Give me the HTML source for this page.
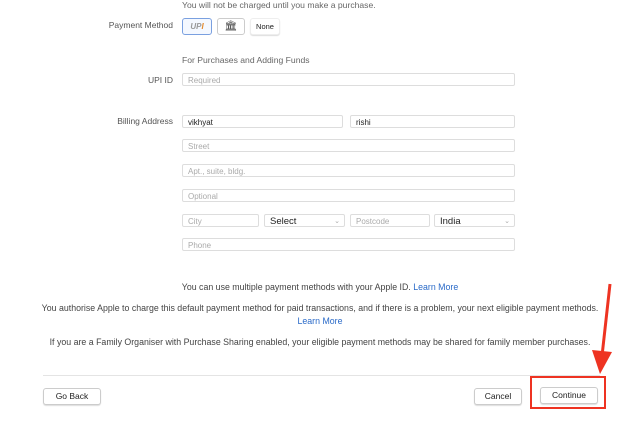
<html><head><style>
body{margin:0;width:640px;height:428px;background:#fff;font-family:"Liberation Sans",sans-serif;position:relative;overflow:hidden;color:#333}
.a{position:absolute}
.l{position:absolute;font-size:8.5px;color:#555;text-align:right;width:100px}
.i{position:absolute;height:13px;border:1px solid #ddd;border-radius:2px;font-size:8px;color:#aaa;line-height:13px;padding-left:5px;box-sizing:border-box}
.v{color:#222}
.t{position:absolute;font-size:8.8px;color:#444;width:640px;text-align:center;white-space:nowrap}
.b{position:absolute;border:1px solid #ccc;border-radius:3px;font-size:8.5px;text-align:center;line-height:15px;height:17px;box-sizing:border-box;background:#fff;color:#222;box-shadow:0 1px 1px #ddd}
a{color:#2a6ac8;text-decoration:none}
</style></head><body>
<div class="a" style="left:182px;top:0;font-size:8.6px;color:#666">You will not be charged until you make a purchase.</div>
<div class="l" style="left:73px;top:20px">Payment Method</div>
<div class="a" style="left:182px;top:18px;width:30px;height:17px;border:1px solid #7aa0e0;border-radius:3px;background:#f4f8ff;box-sizing:border-box;font-size:8px;font-style:italic;font-weight:bold;color:#999;text-align:center;line-height:15px">UP<span style="color:#e58a2a">I</span></div>
<div class="a" style="left:217px;top:18px;width:28px;height:17px;border:1px solid #ccc;border-radius:3px;box-sizing:border-box;text-align:center;font-size:10px;line-height:15px">🏛</div>
<div class="b" style="left:250px;top:18px;width:30px;font-size:7.5px;border-color:#eee">None</div>
<div class="a" style="left:182px;top:55px;font-size:8.6px;color:#666">For Purchases and Adding Funds</div>
<div class="l" style="left:73px;top:75px">UPI ID</div>
<div class="i" style="left:182px;top:73px;width:333px">Required</div>
<div class="l" style="left:73px;top:116px">Billing Address</div>
<div class="i v" style="left:182px;top:115px;width:161px">vikhyat</div>
<div class="i v" style="left:350px;top:115px;width:165px">rishi</div>
<div class="i" style="left:182px;top:139px;width:333px">Street</div>
<div class="i" style="left:182px;top:164px;width:333px">Apt., suite, bldg.</div>
<div class="i" style="left:182px;top:189px;width:333px">Optional</div>
<div class="i" style="left:182px;top:214px;width:77px">City</div>
<div class="i v" style="left:264px;top:214px;width:81px;font-size:9.5px">Select<span style="float:right;margin-right:4px;color:#aaa;font-size:7px">⌄</span></div>
<div class="i" style="left:350px;top:214px;width:80px">Postcode</div>
<div class="i v" style="left:434px;top:214px;width:81px;font-size:9.5px">India<span style="float:right;margin-right:4px;color:#aaa;font-size:7px">⌄</span></div>
<div class="i" style="left:182px;top:238px;width:333px">Phone</div>
<div class="t" style="top:282px">You can use multiple payment methods with your Apple ID. <a>Learn More</a></div>
<div class="t" style="top:303px">You authorise Apple to charge this default payment method for paid transactions, and if there is a problem, your next eligible payment methods.</div>
<div class="t" style="top:316px"><a>Learn More</a></div>
<div class="t" style="top:337px">If you are a Family Organiser with Purchase Sharing enabled, your eligible payment methods may be shared for family member purchases.</div>
<div class="a" style="left:43px;top:375px;width:557px;height:1px;background:#e4e4e4"></div>
<div class="b" style="left:43px;top:388px;width:58px">Go Back</div>
<div class="b" style="left:474px;top:388px;width:48px">Cancel</div>
<div class="b" style="left:540px;top:387px;width:58px">Continue</div>
<div class="a" style="left:530px;top:376px;width:76px;height:33px;border:2px solid #ee3322;box-sizing:border-box"></div>
<svg class="a" style="left:585px;top:280px" width="40" height="96"><line x1="25" y1="4" x2="17" y2="76" stroke="#ee3322" stroke-width="3"/><polygon points="7,70 27,72 15,94" fill="#ee3322"/></svg>
</body></html>
